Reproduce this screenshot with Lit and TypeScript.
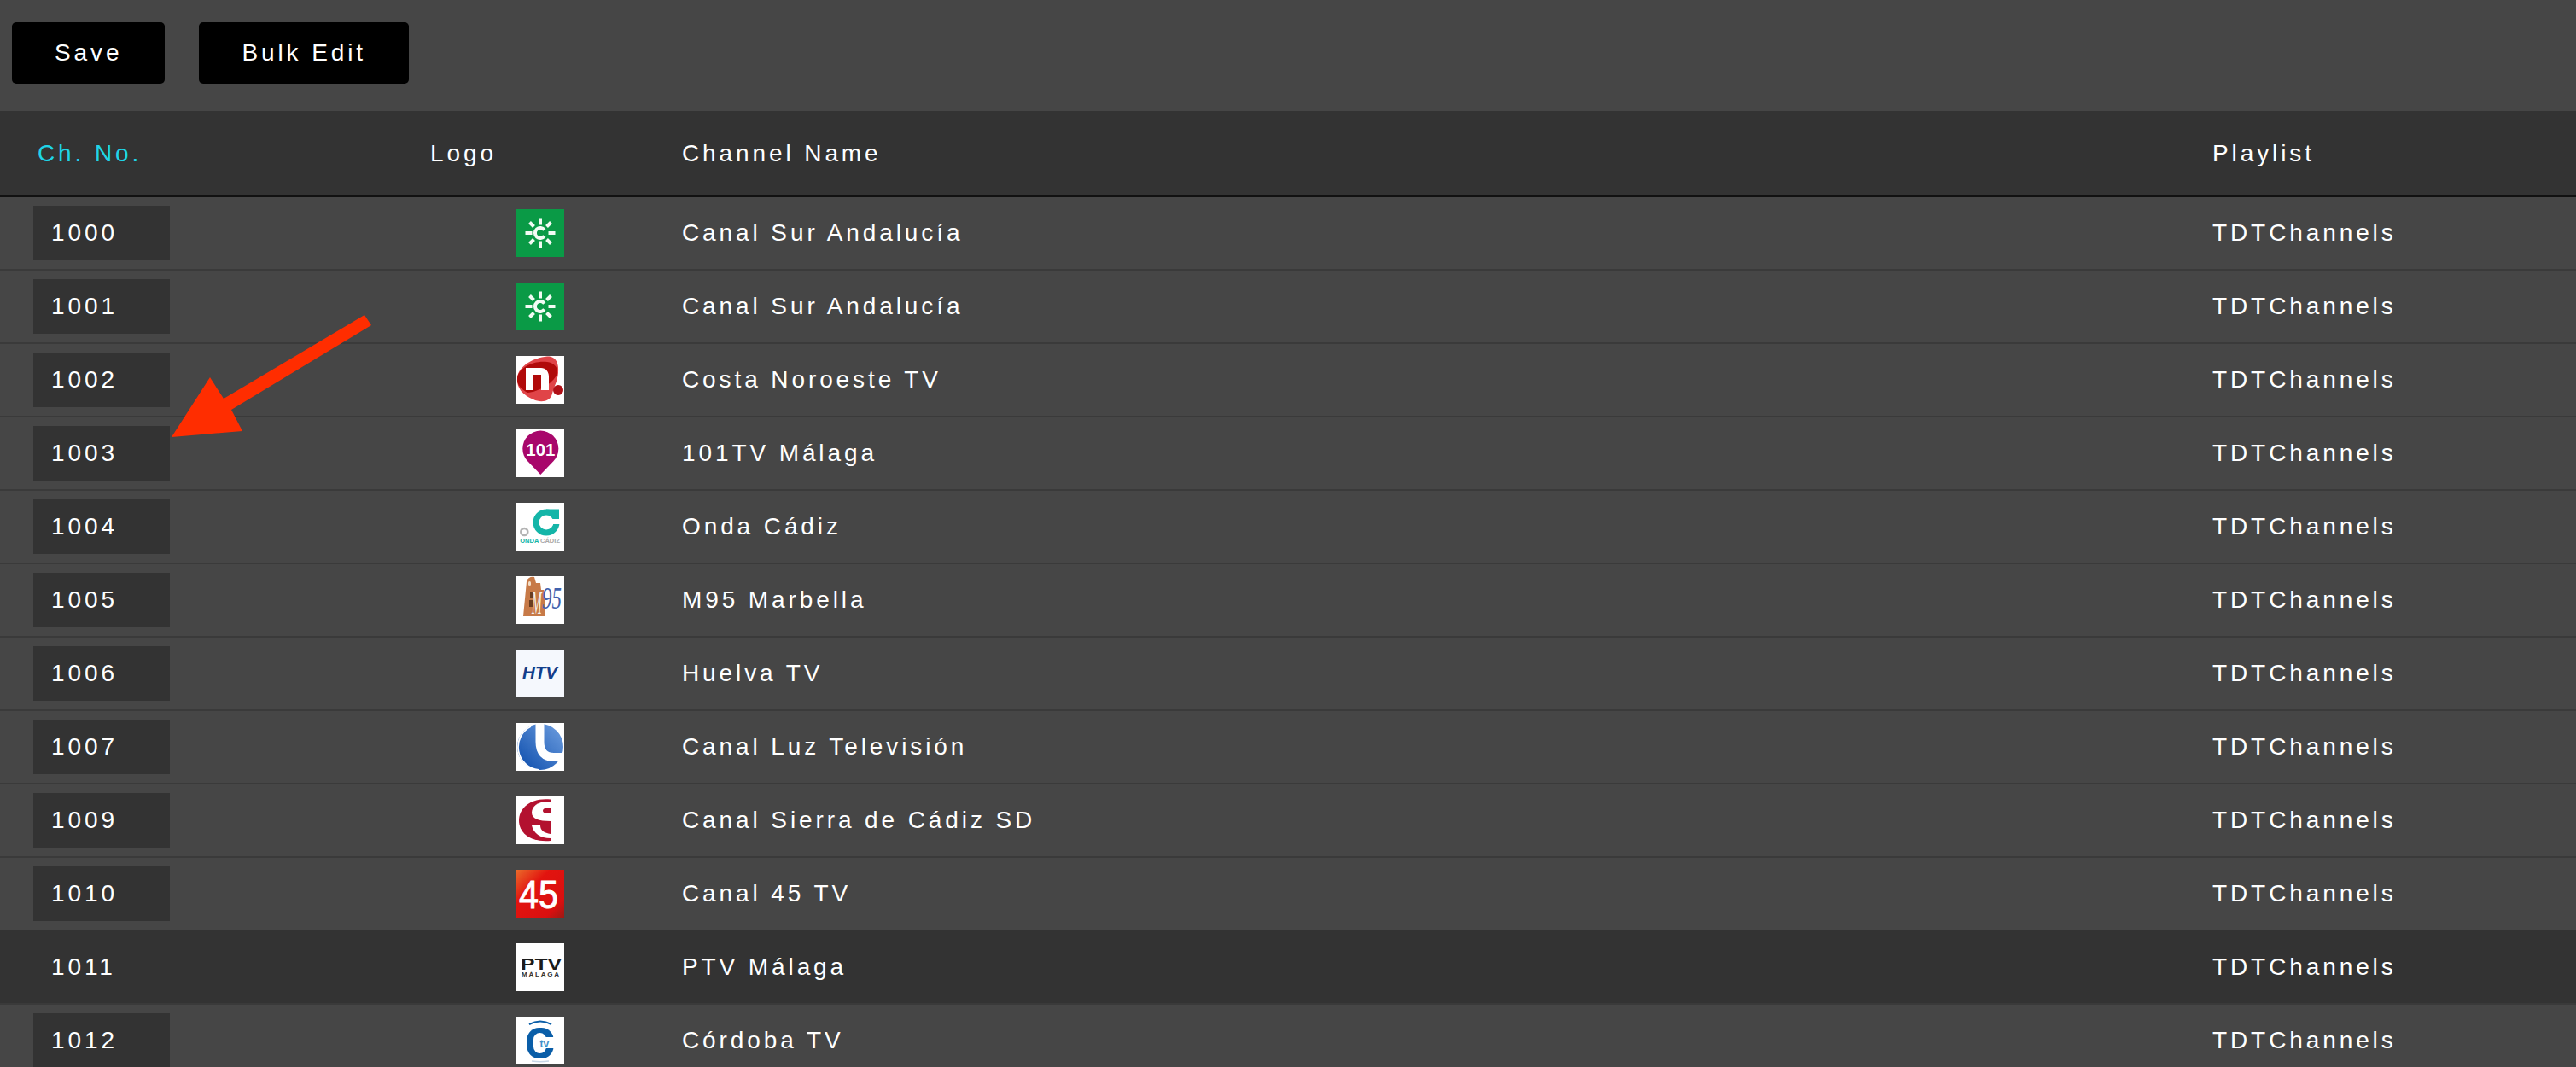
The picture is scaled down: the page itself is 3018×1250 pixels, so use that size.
import { LitElement, html, css, svg } from 'lit'
import { customElement } from 'lit/decorators.js'

const logos: Record<string, unknown> = {
	sur: svg`
		<rect width="56" height="56" fill="#0a9a46" />
		<g stroke="#f2fbf4" stroke-width="4" fill="none">
			<path d="M28 10.500V18.500M28 37.500V45.500M10.500 28H18.500M37.500 28H45.500M15.500 15.500L20.500 20.500M35.500 35.500L40.500 40.500M40.500 15.500L35.500 20.500M20.500 35.500L15.500 40.500" />
			<path d="M32.800 24.500a6 6 0 1 0 0 7" />
		</g>
	`,
	noroeste: svg`
		<rect width="56" height="56" fill="#fff" />
		<path d="M1 26C2 12 20 2 36 0.500C47 0 50 10 49 20C48 30 44 36 42 44C40 54 28 55 20 51C8 46 0 38 1 26Z" fill="#e04448" />
		<path d="M1 26C2 14 20 5 36 7C44 8 49 13 48 21C42 33 26 42 13 43C6 39 0 34 1 26Z" fill="#b00a0a" />
		<path d="M11 40V14H29C34 14 38 18 38 24V40H29V22H20V40Z" fill="#fff" />
		<circle cx="49" cy="40" r="6" fill="#b00f16" />
	`,
	m101: svg`
		<rect width="56" height="56" fill="#fff" />
		<path d="M28.300 53L13 37A21 21 0 1 1 43.600 37Z" fill="#a8076b" />
		<text x="28.300" y="31" text-anchor="middle" font-family="Liberation Sans" font-weight="700" font-size="21" textLength="34" lengthAdjust="spacingAndGlyphs" fill="#fff">101</text>
	`,
	onda: svg`
		<rect width="56" height="56" fill="#fff" />
		<circle cx="35" cy="23" r="15.500" fill="#14b5a8" />
		<path d="M35 7.500H50V23H35Z" fill="#14b5a8" />
		<circle cx="35" cy="23" r="8.500" fill="#fff" />
		<rect x="38" y="19" width="14" height="6" fill="#fff" />
		<circle cx="9.300" cy="34" r="4" fill="none" stroke="#b4b4b4" stroke-width="2.600" />
		<text x="4.300" y="47" font-family="Liberation Sans" font-weight="700" font-size="7" textLength="22" lengthAdjust="spacingAndGlyphs" fill="#14b5a8">ONDA</text>
		<text x="28" y="47" font-family="Liberation Sans" font-weight="700" font-size="7" textLength="23" lengthAdjust="spacingAndGlyphs" fill="#a9a9a9">CÁDIZ</text>
	`,
	m95: svg`
		<rect width="56" height="56" fill="#fff" />
		<path d="M8 47L12 6C13 2 17 0 21 1L23 8H28L29 16H32L34 24L33 47Z" fill="#c77a48" />
		<rect x="14" y="6" width="3" height="5" rx="1.500" fill="#f3dfc8" />
		<rect x="16" y="18" width="4" height="8" fill="#6a3d20" />
		<rect x="15" y="28" width="4" height="8" fill="#6a3d20" />
		<text transform="translate(18 44) scale(0.7 1.9)" font-family="Liberation Serif" font-style="italic" font-size="20" fill="#f4f1ee">M</text>
		<text transform="translate(30 38) scale(0.95 1.5)" font-family="Liberation Serif" font-style="italic" font-size="24" fill="#4061ad">95</text>
	`,
	htv: svg`
		<rect width="56" height="56" fill="#f5f8fd" />
		<text x="7" y="34" font-family="Liberation Sans" font-weight="700" font-style="italic" font-size="20" textLength="41" lengthAdjust="spacingAndGlyphs" fill="#123f8c">HTV</text>
	`,
	luz: svg`
		<defs>
			<linearGradient id="luzFill" x1="0" y1="1" x2="1" y2="0">
				<stop offset="0" stop-color="#0a4bab" />
				<stop offset="1" stop-color="#6f9fe0" />
			</linearGradient>
		</defs>
		<rect width="56" height="56" fill="#fff" />
		<circle cx="28" cy="28" r="27" fill="url(#luzFill)" />
		<path d="M27.500 -1V22Q27.500 40 44 40H57" fill="none" stroke="#fff" stroke-width="10" />
		<path d="M17 4A27 27 0 0 0 26 55" fill="none" stroke="#fff" stroke-width="1.800" />
	`,
	sierra: svg`
		<rect width="56" height="56" fill="#fff" />
		<path d="M40 3.500C15 1 3 15 3 28C3 42 15 54 40 52Z" fill="#b3112f" />
		<path d="M40 6C26 5 18 11 18 19C18 26 26 29 40 29Z" fill="#fff" />
		<path d="M18 34H28C28 40 33 43 40 44V49C28 49 20 43 18 34Z" fill="#fff" />
		<path d="M40 14V19.500H34C32 19.500 31 18 31 16.800C31 15.500 32 14 34 14Z" fill="#b3112f" />
	`,
	c45: svg`
		<defs>
			<linearGradient id="c45Fill" x1="0" y1="0" x2="1" y2="1">
				<stop offset="0" stop-color="#ea6a2a" />
				<stop offset="0.350" stop-color="#e2140f" />
				<stop offset="0.800" stop-color="#d90f10" />
				<stop offset="1" stop-color="#9c1a14" />
			</linearGradient>
		</defs>
		<rect width="56" height="56" fill="url(#c45Fill)" />
		<text x="26" y="44.500" text-anchor="middle" font-family="Liberation Sans" font-size="46" textLength="46" lengthAdjust="spacingAndGlyphs" fill="#fff" stroke="#fff" stroke-width="0.900">45</text>
	`,
	ptv: svg`
		<rect width="56" height="56" fill="#fff" />
		<text x="5" y="31" font-family="Liberation Sans" font-weight="700" font-size="19" textLength="48" lengthAdjust="spacingAndGlyphs" fill="#1b1b1b">PTV</text>
		<text x="6" y="39" font-family="Liberation Sans" font-weight="700" font-size="8" textLength="44" fill="#333">MÁLAGA</text>
	`,
	ctv: svg`
		<rect width="56" height="56" fill="#fff" />
		<path d="M15 9Q28 2 41 9" fill="none" stroke="#0a5ea8" stroke-width="2" />
		<rect x="12.500" y="13" width="31" height="36" rx="14" fill="#0a5ea8" />
		<rect x="20" y="19" width="15" height="24" rx="7.500" fill="#fff" />
		<rect x="33" y="24" width="12" height="13" fill="#fff" />
		<text x="27.500" y="36" font-family="Liberation Sans" font-weight="700" font-size="12" fill="#3f92cc">tv</text>
		<path d="M18 52Q28 53.500 38 52" fill="none" stroke="#c6d6e6" stroke-width="1.500" />
	`,
}

const channels = [
	{ no: '1000', logo: 'sur', name: 'Canal Sur Andalucía' },
	{ no: '1001', logo: 'sur', name: 'Canal Sur Andalucía' },
	{ no: '1002', logo: 'noroeste', name: 'Costa Noroeste TV' },
	{ no: '1003', logo: 'm101', name: '101TV Málaga' },
	{ no: '1004', logo: 'onda', name: 'Onda Cádiz' },
	{ no: '1005', logo: 'm95', name: 'M95 Marbella' },
	{ no: '1006', logo: 'htv', name: 'Huelva TV' },
	{ no: '1007', logo: 'luz', name: 'Canal Luz Televisión' },
	{ no: '1009', logo: 'sierra', name: 'Canal Sierra de Cádiz SD' },
	{ no: '1010', logo: 'c45', name: 'Canal 45 TV' },
	{ no: '1011', logo: 'ptv', name: 'PTV Málaga', active: true },
	{ no: '1012', logo: 'ctv', name: 'Córdoba TV' },
]

@customElement('app-root')
export class AppRoot extends LitElement {
	static styles = css`
		:host {
			display: block;
			position: relative;
			height: 1250px;
			overflow: hidden;
			background: #464646;
			color: #fff;
			font-family: 'Liberation Sans', Arial, sans-serif;
			font-size: 28px;
			letter-spacing: 3.9px;
		}

		.toolbar {
			display: flex;
			gap: 40px;
			height: 130px;
			box-sizing: border-box;
			padding: 26px 14px 32px;
		}

		.btn {
			display: flex;
			align-items: center;
			padding: 0 50px;
			border: 0;
			border-radius: 5px;
			background: #000;
			color: #fff;
			font: inherit;
			letter-spacing: inherit;
		}

		.row {
			display: grid;
			grid-template-columns: 504px 295px 1793px 1fr;
			align-items: center;
		}

		.head {
			height: 99px;
			background: #333;
			border-bottom: 2px solid #111;
		}

		.head .sorted {
			padding-left: 44px;
			color: #1fd5e8;
		}

		.item {
			height: 84px;
			border-bottom: 2px solid #3a3a3a;
		}

		.item.active {
			background: #333;
			margin-top: -2px;
			padding-top: 2px;
		}

		.num {
			width: 160px;
			height: 64px;
			margin-left: 39px;
			padding-left: 21px;
			box-sizing: border-box;
			line-height: 64px;
			background: #333;
		}

		.logo {
			display: block;
			width: 56px;
			height: 56px;
			margin-left: 101px;
			letter-spacing: 0;
		}

		.arrow {
			position: absolute;
			left: 0;
			top: 0;
			pointer-events: none;
		}
	`

	render() {
		return html`
			<div class="toolbar">
				<button class="btn">Save</button>
				<button class="btn">Bulk Edit</button>
			</div>
			<div class="row head">
				<div class="sorted">Ch. No.</div>
				<div>Logo</div>
				<div>Channel Name</div>
				<div>Playlist</div>
			</div>
			${channels.map(
				(c) => html`
					<div class="row item ${c.active ? 'active' : ''}">
						<div class="num">${c.no}</div>
						<svg class="logo" viewBox="0 0 56 56">${logos[c.logo]}</svg>
						<div>${c.name}</div>
						<div>TDTChannels</div>
					</div>
				`,
			)}
			<svg class="arrow" width="500" height="560" viewBox="0 0 500 560">
				<path
					d="M201 512L246 442L262 467L427 369L435 381L271 480L284 505Z"
					fill="#ff2d00"
				/>
			</svg>
		`
	}
}
